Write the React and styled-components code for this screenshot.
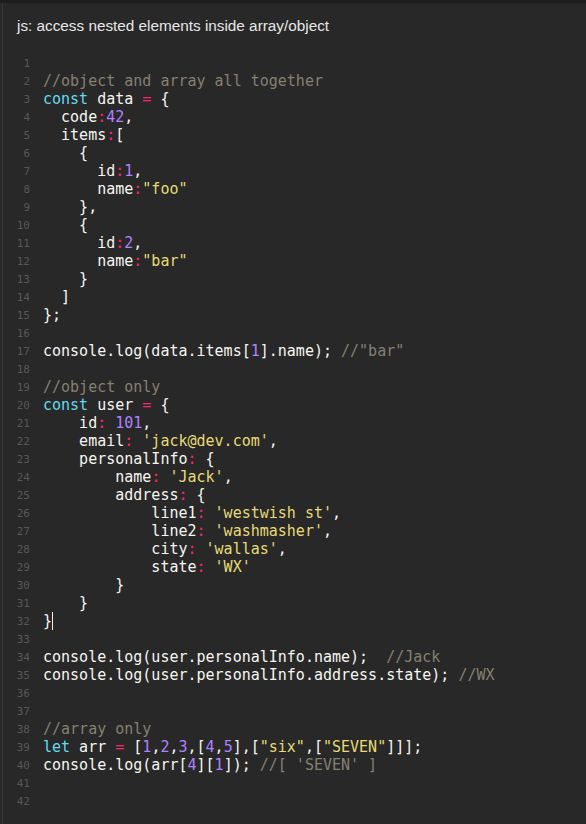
import React from 'react'
import styled, { createGlobalStyle } from 'styled-components'

const GlobalStyle = createGlobalStyle`
  html, body {
    margin: 0;
    padding: 0;
    background: #282828;
  }
`

const Window = styled.div`
  width: 586px;
  height: 824px;
  background: #282828;
  border-top: 3px solid #1d1d1d;
  box-sizing: border-box;
  display: flex;
  flex-direction: column;
  position: relative;
  overflow: hidden;
  &::before {
    content: "";
    position: absolute;
    left: 2px;
    top: 0;
    bottom: 0;
    width: 1px;
    background: #353535;
  }
`

const Title = styled.h1`
  margin: 0;
  height: 50px;
  display: flex;
  align-items: center;
  padding: 0 0 4px 17px;
  box-sizing: border-box;
  font-family: "Liberation Sans", Arial, sans-serif;
  font-weight: normal;
  font-size: 15.3px;
  color: #e6e6e6;
`

const Editor = styled.div`
  display: flex;
  flex-direction: column;
  padding-top: 1px;
`

const Row = styled.div`
  display: flex;
  height: 18px;
  align-items: center;
`

const Num = styled.span`
  width: 30px;
  text-align: right;
  padding-right: 13px;
  box-sizing: content-box;
  font-family: "DejaVu Sans Mono", monospace;
  font-size: 11px;
  color: #575757;
  flex: none;
`

const Code = styled.span`
  font-family: "DejaVu Sans Mono", Menlo, monospace;
  font-size: 15px;
  white-space: pre;
  color: #f6f6f0;
  line-height: 18px;
`

const colors = {
  t: '#f6f6f0',
  k: '#66d9ef',
  o: '#f92672',
  n: '#ae81ff',
  s: '#e6db74',
  c: '#858070',
}

const Tok = styled.span`
  color: ${p => colors[p.$kind]};
`

const Cursor = styled.span`
  display: inline-block;
  width: 1px;
  height: 18px;
  background: #f0f0f0;
  vertical-align: top;
`

// each line: list of [kind, text]
const lines = [
  [],
  [['c', '//object and array all together']],
  [['k', 'const'], ['t', ' data '], ['o', '='], ['t', ' {']],
  [['t', '  code'], ['o', ':'], ['n', '42'], ['t', ',']],
  [['t', '  items'], ['o', ':'], ['t', '[']],
  [['t', '    {']],
  [['t', '      id'], ['o', ':'], ['n', '1'], ['t', ',']],
  [['t', '      name'], ['o', ':'], ['s', '"foo"']],
  [['t', '    },']],
  [['t', '    {']],
  [['t', '      id'], ['o', ':'], ['n', '2'], ['t', ',']],
  [['t', '      name'], ['o', ':'], ['s', '"bar"']],
  [['t', '    }']],
  [['t', '  ]']],
  [['t', '};']],
  [],
  [['t', 'console.log(data.items['], ['n', '1'], ['t', '].name); '], ['c', '//"bar"']],
  [],
  [['c', '//object only']],
  [['k', 'const'], ['t', ' user '], ['o', '='], ['t', ' {']],
  [['t', '    id'], ['o', ':'], ['t', ' '], ['n', '101'], ['t', ',']],
  [['t', '    email'], ['o', ':'], ['t', ' '], ['s', "'jack@dev.com'"], ['t', ',']],
  [['t', '    personalInfo'], ['o', ':'], ['t', ' {']],
  [['t', '        name'], ['o', ':'], ['t', ' '], ['s', "'Jack'"], ['t', ',']],
  [['t', '        address'], ['o', ':'], ['t', ' {']],
  [['t', '            line1'], ['o', ':'], ['t', ' '], ['s', "'westwish st'"], ['t', ',']],
  [['t', '            line2'], ['o', ':'], ['t', ' '], ['s', "'washmasher'"], ['t', ',']],
  [['t', '            city'], ['o', ':'], ['t', ' '], ['s', "'wallas'"], ['t', ',']],
  [['t', '            state'], ['o', ':'], ['t', ' '], ['s', "'WX'"]],
  [['t', '        }']],
  [['t', '    }']],
  [['t', '}'], ['cursor']],
  [],
  [['t', 'console.log(user.personalInfo.name);  '], ['c', '//Jack']],
  [['t', 'console.log(user.personalInfo.address.state); '], ['c', '//WX']],
  [],
  [],
  [['c', '//array only']],
  [
    ['k', 'let'], ['t', ' arr '], ['o', '='], ['t', ' ['],
    ['n', '1'], ['t', ','], ['n', '2'], ['t', ','], ['n', '3'], ['t', ',['],
    ['n', '4'], ['t', ','], ['n', '5'], ['t', '],['],
    ['s', '"six"'], ['t', ',['], ['s', '"SEVEN"'], ['t', ']]];'],
  ],
  [['t', 'console.log(arr['], ['n', '4'], ['t', ']['], ['n', '1'], ['t', ']); '], ['c', "//[ 'SEVEN' ]"]],
  [],
  [],
]

const App = () => {
  return (
    <>
      <GlobalStyle />
      <Window>
        <Title>js: access nested elements inside array/object</Title>
        <Editor>
          {lines.map((toks, i) => (
            <Row key={i}>
              <Num>{i + 1}</Num>
              <Code>
                {toks.map(([kind, text], j) =>
                  kind === 'cursor'
                    ? <Cursor key={j} />
                    : <Tok key={j} $kind={kind}>{text}</Tok>
                )}
              </Code>
            </Row>
          ))}
        </Editor>
      </Window>
    </>
  )
}

export default App
